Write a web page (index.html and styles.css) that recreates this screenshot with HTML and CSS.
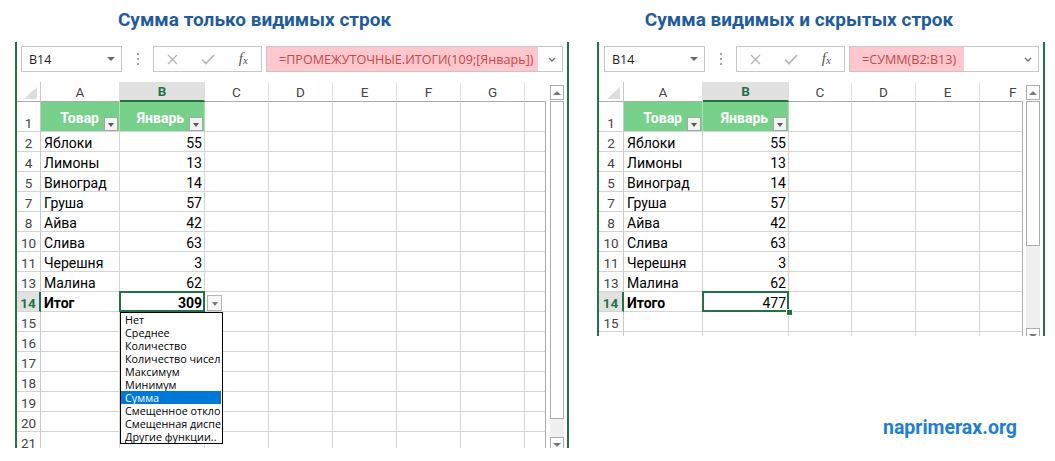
FILE: index.html
```html
<!DOCTYPE html>
<html lang="ru">
<head>
    <meta charset="UTF-8">
    <meta name="viewport" content="width=device-width, initial-scale=1.0">
    <title>Сумма видимых и скрытых строк</title>
    <link rel="stylesheet" href="styles.css">
</head>
<body>
    <div class="page">
        <section class="demo demo-left">
            <h1 class="demo-title">Сумма только видимых строк</h1>
            <div class="book">
                <div class="formula-bar">
                    <div class="name-box">B14<span class="name-caret"></span></div>
                    <div class="bar-grip"><span></span></div>
                    <div class="fx-box">
                        <span class="fx-btn"><svg width="11" height="11" viewBox="0 0 11 11"><path d="M1 1L10 10M10 1L1 10" stroke="#b5b5b5" stroke-width="1.3" fill="none"/></svg></span>
                        <span class="fx-btn"><svg width="14" height="11" viewBox="0 0 14 11"><path d="M1 5.5L5 9.5L13 1" stroke="#b5b5b5" stroke-width="1.7" fill="none"/></svg></span>
                        <span class="fx-btn fx-label">f<i>x</i></span>
                    </div>
                    <div class="formula-input">
                        <span class="formula-text">=ПРОМЕЖУТОЧНЫЕ.ИТОГИ(109;[Январь])</span>
                        <span class="formula-expand"><svg width="8" height="5" viewBox="0 0 8 5"><path d="M1 1L4 4L7 1" stroke="#707070" stroke-width="1.4" fill="none"/></svg></span>
                    </div>
                </div>
                <div class="sheet-wrap">
                    <div class="sheet">
                        <div class="corner"><svg width="13" height="12" viewBox="0 0 13 12"><polygon points="13,0 13,12 0,12" fill="#dcdcdc"/></svg></div><div class="col-head">A</div><div class="col-head is-active">B</div><div class="col-head">C</div><div class="col-head">D</div><div class="col-head">E</div><div class="col-head">F</div><div class="col-head">G</div><div class="col-head last"></div>
                        <div class="row-head">1</div><div class="cell th"><span>Товар</span><span class="filter-btn"></span></div><div class="cell th"><span>Январь</span><span class="filter-btn"></span></div><div class="cell"></div><div class="cell"></div><div class="cell"></div><div class="cell"></div><div class="cell"></div><div class="cell edge"></div>
                        <div class="row-head">2</div><div class="cell">Яблоки</div><div class="cell num">55</div><div class="cell"></div><div class="cell"></div><div class="cell"></div><div class="cell"></div><div class="cell"></div><div class="cell edge"></div>
                        <div class="row-head">4</div><div class="cell">Лимоны</div><div class="cell num">13</div><div class="cell"></div><div class="cell"></div><div class="cell"></div><div class="cell"></div><div class="cell"></div><div class="cell edge"></div>
                        <div class="row-head">5</div><div class="cell">Виноград</div><div class="cell num">14</div><div class="cell"></div><div class="cell"></div><div class="cell"></div><div class="cell"></div><div class="cell"></div><div class="cell edge"></div>
                        <div class="row-head">7</div><div class="cell">Груша</div><div class="cell num">57</div><div class="cell"></div><div class="cell"></div><div class="cell"></div><div class="cell"></div><div class="cell"></div><div class="cell edge"></div>
                        <div class="row-head">8</div><div class="cell">Айва</div><div class="cell num">42</div><div class="cell"></div><div class="cell"></div><div class="cell"></div><div class="cell"></div><div class="cell"></div><div class="cell edge"></div>
                        <div class="row-head">10</div><div class="cell">Слива</div><div class="cell num">63</div><div class="cell"></div><div class="cell"></div><div class="cell"></div><div class="cell"></div><div class="cell"></div><div class="cell edge"></div>
                        <div class="row-head">11</div><div class="cell">Черешня</div><div class="cell num">3</div><div class="cell"></div><div class="cell"></div><div class="cell"></div><div class="cell"></div><div class="cell"></div><div class="cell edge"></div>
                        <div class="row-head">13</div><div class="cell">Малина</div><div class="cell num">62</div><div class="cell"></div><div class="cell"></div><div class="cell"></div><div class="cell"></div><div class="cell"></div><div class="cell edge"></div>
                        <div class="row-head is-active">14</div><div class="cell total">Итог</div>
                        <div class="cell num total selected">309
                            <ul class="agg-list">
                                <li>Нет</li>
                                <li>Среднее</li>
                                <li>Количество</li>
                                <li>Количество чисел</li>
                                <li>Максимум</li>
                                <li>Минимум</li>
                                <li class="is-active">Сумма</li>
                                <li>Смещенное откло</li>
                                <li>Смещенная диспе</li>
                                <li>Другие функции..</li>
                            </ul>
                        </div>
                        <div class="cell"><span class="cell-drop"></span></div><div class="cell"></div><div class="cell"></div><div class="cell"></div><div class="cell"></div><div class="cell edge"></div>
                        <div class="row-head">15</div><div class="cell"></div><div class="cell"></div><div class="cell"></div><div class="cell"></div><div class="cell"></div><div class="cell"></div><div class="cell"></div><div class="cell edge"></div>
                        <div class="row-head">16</div><div class="cell"></div><div class="cell"></div><div class="cell"></div><div class="cell"></div><div class="cell"></div><div class="cell"></div><div class="cell"></div><div class="cell edge"></div>
                        <div class="row-head">17</div><div class="cell"></div><div class="cell"></div><div class="cell"></div><div class="cell"></div><div class="cell"></div><div class="cell"></div><div class="cell"></div><div class="cell edge"></div>
                        <div class="row-head">18</div><div class="cell"></div><div class="cell"></div><div class="cell"></div><div class="cell"></div><div class="cell"></div><div class="cell"></div><div class="cell"></div><div class="cell edge"></div>
                        <div class="row-head">19</div><div class="cell"></div><div class="cell"></div><div class="cell"></div><div class="cell"></div><div class="cell"></div><div class="cell"></div><div class="cell"></div><div class="cell edge"></div>
                        <div class="row-head">20</div><div class="cell"></div><div class="cell"></div><div class="cell"></div><div class="cell"></div><div class="cell"></div><div class="cell"></div><div class="cell"></div><div class="cell edge"></div>
                        <div class="row-head">21</div><div class="cell"></div><div class="cell"></div><div class="cell"></div><div class="cell"></div><div class="cell"></div><div class="cell"></div><div class="cell"></div><div class="cell edge"></div>
                    </div>
                    <div class="scrollbar">
                        <div class="scroll-btn scroll-up"></div>
                        <div class="scroll-thumb"></div>
                        <div class="scroll-track"></div>
                        <div class="scroll-btn scroll-down"></div>
                    </div>
                </div>
            </div>
        </section>

        <section class="demo demo-right">
            <h1 class="demo-title">Сумма видимых и скрытых строк</h1>
            <div class="book">
                <div class="formula-bar">
                    <div class="name-box">B14<span class="name-caret"></span></div>
                    <div class="bar-grip"><span></span></div>
                    <div class="fx-box">
                        <span class="fx-btn"><svg width="11" height="11" viewBox="0 0 11 11"><path d="M1 1L10 10M10 1L1 10" stroke="#b5b5b5" stroke-width="1.3" fill="none"/></svg></span>
                        <span class="fx-btn"><svg width="14" height="11" viewBox="0 0 14 11"><path d="M1 5.5L5 9.5L13 1" stroke="#b5b5b5" stroke-width="1.7" fill="none"/></svg></span>
                        <span class="fx-btn fx-label">f<i>x</i></span>
                    </div>
                    <div class="formula-input">
                        <span class="formula-text">=СУММ(B2:B13)</span>
                        <span class="formula-expand"><svg width="8" height="5" viewBox="0 0 8 5"><path d="M1 1L4 4L7 1" stroke="#707070" stroke-width="1.4" fill="none"/></svg></span>
                    </div>
                </div>
                <div class="sheet-wrap">
                    <div class="sheet">
                        <div class="corner"><svg width="13" height="12" viewBox="0 0 13 12"><polygon points="13,0 13,12 0,12" fill="#dcdcdc"/></svg></div><div class="col-head">A</div><div class="col-head is-active">B</div><div class="col-head">C</div><div class="col-head">D</div><div class="col-head">E</div><div class="col-head last partial">F</div>
                        <div class="row-head">1</div><div class="cell th"><span>Товар</span><span class="filter-btn"></span></div><div class="cell th"><span>Январь</span><span class="filter-btn"></span></div><div class="cell"></div><div class="cell"></div><div class="cell"></div><div class="cell edge"></div>
                        <div class="row-head">2</div><div class="cell">Яблоки</div><div class="cell num">55</div><div class="cell"></div><div class="cell"></div><div class="cell"></div><div class="cell edge"></div>
                        <div class="row-head">4</div><div class="cell">Лимоны</div><div class="cell num">13</div><div class="cell"></div><div class="cell"></div><div class="cell"></div><div class="cell edge"></div>
                        <div class="row-head">5</div><div class="cell">Виноград</div><div class="cell num">14</div><div class="cell"></div><div class="cell"></div><div class="cell"></div><div class="cell edge"></div>
                        <div class="row-head">7</div><div class="cell">Груша</div><div class="cell num">57</div><div class="cell"></div><div class="cell"></div><div class="cell"></div><div class="cell edge"></div>
                        <div class="row-head">8</div><div class="cell">Айва</div><div class="cell num">42</div><div class="cell"></div><div class="cell"></div><div class="cell"></div><div class="cell edge"></div>
                        <div class="row-head">10</div><div class="cell">Слива</div><div class="cell num">63</div><div class="cell"></div><div class="cell"></div><div class="cell"></div><div class="cell edge"></div>
                        <div class="row-head">11</div><div class="cell">Черешня</div><div class="cell num">3</div><div class="cell"></div><div class="cell"></div><div class="cell"></div><div class="cell edge"></div>
                        <div class="row-head">13</div><div class="cell">Малина</div><div class="cell num">62</div><div class="cell"></div><div class="cell"></div><div class="cell"></div><div class="cell edge"></div>
                        <div class="row-head is-active">14</div><div class="cell total">Итого</div><div class="cell num selected with-handle">477</div><div class="cell"></div><div class="cell"></div><div class="cell"></div><div class="cell edge"></div>
                        <div class="row-head">15</div><div class="cell"></div><div class="cell"></div><div class="cell"></div><div class="cell"></div><div class="cell"></div><div class="cell edge"></div>
                        <div class="row-head"></div><div class="cell"></div><div class="cell"></div><div class="cell"></div><div class="cell"></div><div class="cell"></div><div class="cell edge"></div>
                    </div>
                    <div class="scrollbar">
                        <div class="scroll-btn scroll-up"></div>
                        <div class="scroll-thumb"></div>
                        <div class="scroll-track"></div>
                        <div class="scroll-btn scroll-down"></div>
                    </div>
                </div>
            </div>
            <div class="brand">naprimerax.org</div>
        </section>
    </div>
</body>
</html>
```

FILE: styles.css
```css
body {
    margin: 0;
    background: #fff;
    font-family: "Open Sans", sans-serif;
    color: #000;
}

.page {
    display: flex;
    gap: 28px;
    padding: 6px 0 0 15px;
}

.demo-left {
    width: 554px;
}

.demo-right {
    width: 448px;
}

.demo-title {
    margin: 0 0 8px;
    font-family: Roboto, sans-serif;
    font-size: 19px;
    font-weight: 700;
    line-height: 28px;
    color: #1f5b9f;
    text-align: center;
    white-space: nowrap;
}

.demo-left .demo-title {
    padding-right: 75px;
}

.demo-right .demo-title {
    padding-right: 44px;
}

.book {
    border-left: 2px solid #217346;
    border-right: 2px solid #217346;
}

/* formula bar */
.formula-bar {
    display: flex;
    height: 26px;
    padding: 4px 4px 0;
    margin-bottom: 10px;
}

.demo-right .formula-bar {
    padding-left: 5px;
}

.name-box {
    flex-shrink: 0;
    width: 101px;
    box-sizing: border-box;
    border: 1px solid #c6c6c6;
    display: flex;
    align-items: center;
    justify-content: space-between;
    padding: 0 6px 0 7px;
    font-size: 12.5px;
    color: #222;
}

.name-caret {
    width: 0;
    height: 0;
    border-left: 4px solid transparent;
    border-right: 4px solid transparent;
    border-top: 4px solid #6b6b6b;
}

.bar-grip {
    flex-shrink: 0;
    width: 31px;
    display: flex;
    align-items: center;
    justify-content: center;
}

.bar-grip span {
    width: 2px;
    height: 2px;
    background: #a0a0a0;
    box-shadow: 0 -5px 0 #a0a0a0, 0 5px 0 #a0a0a0;
}

.fx-box {
    flex-shrink: 0;
    width: 109px;
    box-sizing: border-box;
    border: 1px solid #c6c6c6;
    display: flex;
    padding-left: 1px;
}

.fx-btn {
    width: 36px;
    display: flex;
    align-items: center;
    justify-content: center;
}

.fx-label {
    font-family: "Liberation Serif", serif;
    font-style: italic;
    font-size: 15px;
    color: #555;
    padding-bottom: 2px;
}

.fx-label i {
    font-size: 11px;
    position: relative;
    top: 2px;
}

.formula-input {
    flex: 1;
    min-width: 0;
    margin-left: 4px;
    border: 1px solid #c6c6c6;
    display: flex;
    justify-content: space-between;
}

.formula-text {
    display: flex;
    align-items: center;
    background: #ffc7ce;
    color: #c84646;
    font-size: 12.6px;
    padding: 0 5px 0 12px;
    white-space: nowrap;
    overflow: hidden;
}

.demo-right .formula-text {
    padding-right: 8px;
}

.formula-expand {
    flex-shrink: 0;
    width: 20px;
    display: flex;
    align-items: center;
    justify-content: center;
}

/* sheet */
.sheet-wrap {
    display: flex;
    align-items: flex-start;
    overflow: hidden;
}

.demo-left .sheet-wrap {
    height: 366px;
}

.demo-right .sheet-wrap {
    height: 254px;
}

.sheet {
    display: grid;
    grid-template-rows: 20px 30px;
    grid-auto-rows: 20px;
    font-family: Roboto, sans-serif;
    font-size: 14px;
    line-height: 16px;
}

.demo-left .sheet {
    grid-template-columns: 24px 79px 85px 64px 64px 64px 64px 64px 21px;
}

.demo-right .sheet {
    grid-template-columns: 25px 79px 86px 63px 64px 64px 43px;
}

.corner,
.col-head,
.row-head,
.cell {
    box-sizing: border-box;
    border-right: 1px solid #d4d4d4;
    border-bottom: 1px solid #d4d4d4;
    display: flex;
    white-space: nowrap;
}

.corner {
    align-items: flex-end;
    justify-content: flex-end;
    padding: 0 3px 2px 0;
    border-right-color: #c8c8c8;
    border-bottom-color: #ababab;
}

.col-head {
    align-items: center;
    justify-content: center;
    color: #444;
    font-size: 13.5px;
    border-right-color: #dedede;
    border-bottom-color: #ababab;
}

.col-head.last {
    border-right: none;
}

.col-head.partial {
    justify-content: flex-start;
    padding-left: 29px;
}

.col-head.is-active {
    background: #e1e1e1;
    color: #217346;
    font-weight: 700;
    border-bottom: 2px solid #217346;
}

.row-head {
    align-items: flex-end;
    justify-content: center;
    color: #444;
    font-size: 13.5px;
    border-right-color: #c8c8c8;
}

.row-head.is-active {
    background: #e1e1e1;
    color: #217346;
    font-weight: 700;
    border-right: 2px solid #217346;
}

.cell {
    align-items: flex-end;
    padding: 0 2px 0 3px;
}

.cell.edge {
    border-right-color: #ababab;
}

.cell.num {
    justify-content: flex-end;
}

.cell.total {
    font-weight: 700;
}

.cell.th {
    background: #78d18b;
    color: #fff;
    font-weight: 700;
    justify-content: flex-end;
    padding-right: 0;
    border-right-color: #a6e2b3;
}

.cell.th span:first-child {
    margin-bottom: 5px;
}

.filter-btn {
    width: 14px;
    height: 14px;
    box-sizing: border-box;
    margin: 0 1px 0 5px;
    border: 1px solid #a6a6a6;
    background: #f3f3f3;
    display: flex;
    align-items: center;
    justify-content: center;
}

.filter-btn::after,
.cell-drop::after {
    content: "";
    margin-top: 1px;
    border-left: 3.5px solid transparent;
    border-right: 3.5px solid transparent;
    border-top: 4px solid #595959;
}

.cell.selected {
    position: relative;
}

.cell.selected::after {
    content: "";
    position: absolute;
    top: -1px;
    left: -1px;
    right: -1px;
    bottom: -1px;
    border: 2px solid #217346;
}

.cell.with-handle::before {
    content: "";
    position: absolute;
    right: -5px;
    bottom: -5px;
    width: 5px;
    height: 5px;
    background: #217346;
    border: 1px solid #fff;
    z-index: 2;
}

.cell-drop {
    width: 15px;
    height: 16px;
    box-sizing: border-box;
    margin-left: -1px;
    border: 1px solid #b4b4b4;
    background: #f7f7f7;
    display: flex;
    align-items: center;
    justify-content: center;
}

.cell-drop::after {
    border-top-color: #7a7a7a;
}

.agg-list {
    position: absolute;
    top: 20px;
    left: 0;
    width: 103px;
    box-sizing: border-box;
    margin: 0;
    padding: 0;
    list-style: none;
    border: 1px solid #000;
    background: #fff;
    overflow: hidden;
    z-index: 3;
    font-family: "Open Sans", sans-serif;
    font-size: 10.8px;
    font-weight: 400;
    line-height: 13px;
    color: #000;
    text-align: left;
}

.agg-list li {
    padding-left: 4px;
    margin-right: 1px;
    white-space: nowrap;
    overflow: hidden;
}

.agg-list li.is-active {
    background: #0078d7;
    color: #fff;
}

/* scrollbar */
.scrollbar {
    flex-shrink: 0;
    width: 14px;
    margin-top: 3px;
    display: flex;
    flex-direction: column;
}

.demo-left .scrollbar {
    margin-left: 4px;
}

.demo-right .scrollbar {
    margin-left: 3px;
}

.scroll-btn {
    height: 15px;
    box-sizing: border-box;
    border: 1px solid #ababab;
    background: #fff;
    display: flex;
    align-items: center;
    justify-content: center;
}

.scroll-up::after,
.scroll-down::after {
    content: "";
    border-left: 4px solid transparent;
    border-right: 4px solid transparent;
}

.scroll-up::after {
    border-bottom: 4px solid #7a7a7a;
}

.scroll-down::after {
    border-top: 4px solid #7a7a7a;
}

.scroll-thumb {
    box-sizing: border-box;
    margin-top: 1px;
    border: 1px solid #ababab;
    background: #fff;
}

.scroll-track {
    background: #f0f0f0;
}

.demo-left .scroll-thumb {
    height: 318px;
}

.demo-left .scroll-track {
    height: 18px;
}

.demo-right .scroll-thumb {
    height: 145px;
}

.demo-right .scroll-track {
    height: 82px;
}

.brand {
    margin-top: 80px;
    padding-right: 28px;
    text-align: right;
    font-family: Roboto, sans-serif;
    font-size: 19.5px;
    font-weight: 700;
    line-height: 24px;
    color: #1e7dd7;
}
```
